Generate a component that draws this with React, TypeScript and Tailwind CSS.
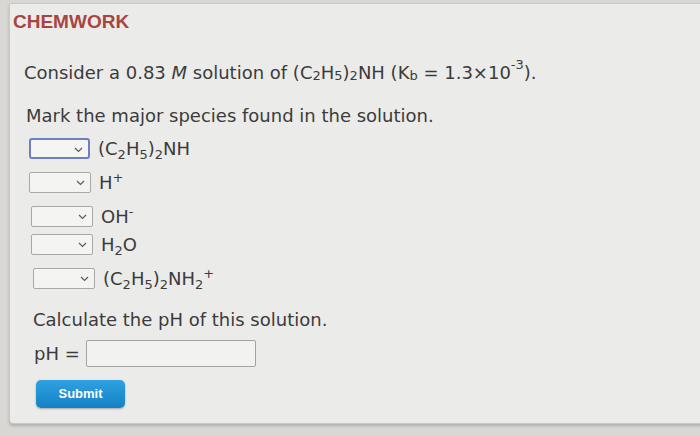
import React from 'react';

const body = { fontFamily: '"DejaVu Sans", Verdana, sans-serif' };

const Sub = ({ children }: { children: React.ReactNode }) => (
  <span className="text-[13px] relative top-[4px]">{children}</span>
);
const Sup = ({ children }: { children: React.ReactNode }) => (
  <span className="text-[13px] relative -top-[7px]">{children}</span>
);

const Chevron = () => (
  <svg width="9" height="6" viewBox="0 0 9 6" className="absolute right-[5px] top-[7px]">
    <path d="M1 1 L4.5 4.5 L8 1" fill="none" stroke="#5a5a5a" strokeWidth="1.2" />
  </svg>
);

const Select = ({ active }: { active?: boolean }) => (
  <div
    className={
      active
        ? 'relative w-[61px] h-[21px] bg-[#f5f5f4] border-2 border-[#6d7fc2] rounded-[3px]'
        : 'relative w-[62px] h-[21px] bg-[#f4f4f3] border border-[#a8a8a6] rounded-[2px]'
    }
  >
    <Chevron />
  </div>
);

type Row = { ml: string; mt: string; label: React.ReactNode; active?: boolean };

const rows: Row[] = [
  {
    ml: 'ml-[19px]',
    mt: 'mt-[8px]',
    active: true,
    label: (
      <>
        (C<Sub>2</Sub>H<Sub>5</Sub>)<Sub>2</Sub>NH
      </>
    ),
  },
  { ml: 'ml-[19px]', mt: 'mt-[12px]', label: <>H<Sup>+</Sup></> },
  { ml: 'ml-[21px]', mt: 'mt-[12px]', label: <>OH<Sup>-</Sup></> },
  { ml: 'ml-[21px]', mt: 'mt-[6px]', label: <>H<Sub>2</Sub>O</> },
  {
    ml: 'ml-[23px]',
    mt: 'mt-[12px]',
    label: (
      <>
        (C<Sub>2</Sub>H<Sub>5</Sub>)<Sub>2</Sub>NH<Sub>2</Sub>
        <Sup>+</Sup>
      </>
    ),
  },
];

export default function App() {
  return (
    <div className="w-[700px] h-[436px] overflow-hidden bg-[#d8d7d4] pt-[3px] pl-[9px]">
      <div
        className="w-[720px] h-[421px] bg-[#ebebe9] border border-[#c9c9c6] rounded-bl-[4px] shadow-[0_2px_3px_rgba(0,0,0,0.18)] text-[#3b3b3b] text-[18px]"
        style={body}
      >
        <div className="pt-[8px] pl-[3px] h-[28px]">
          <div
            className="text-[19px] leading-[20px] font-bold text-[#a8453f]"
            style={{ fontFamily: '"Liberation Sans", Arial, sans-serif' }}
          >
            CHEMWORK
          </div>
        </div>

        <div className="mt-[26px] h-[28px] flex items-center ml-[14px] whitespace-nowrap">
          Consider a 0.83&nbsp;<i>M</i>&nbsp;solution of (C<Sub>2</Sub>H<Sub>5</Sub>)<Sub>2</Sub>NH (K
          <Sub>b</Sub>&nbsp;= 1.3×10<Sup>-3</Sup>).
        </div>

        <div className="mt-[15px] h-[28px] flex items-center ml-[16px]">
          Mark the major species found in the solution.
        </div>

        {rows.map((r, i) => (
          <div key={i} className={`${r.mt} ${r.ml} h-[22px] flex items-center gap-[8px]`}>
            <Select active={r.active} />
            <span className="whitespace-nowrap">{r.label}</span>
          </div>
        ))}

        <div className="mt-[16px] h-[28px] flex items-center ml-[23px]">
          Calculate the pH of this solution.
        </div>

        <div className="mt-[6px] h-[28px] flex items-center ml-[24px] gap-[6px]">
          <span>pH =</span>
          <div className="w-[170px] h-[27px] bg-[#f2f2f1] border border-[#a3a3a1] rounded-[2px]" />
        </div>

        <div className="mt-[11px] ml-[26px]">
          <button
            className="w-[89px] h-[28px] rounded-[5px] bg-gradient-to-b from-[#2ea2e2] to-[#1481c5] text-white text-[13px] font-bold shadow-[0_1px_2px_rgba(0,0,0,0.3)]"
            style={{ fontFamily: '"Liberation Sans", Arial, sans-serif' }}
          >
            Submit
          </button>
        </div>
      </div>
    </div>
  );
}
